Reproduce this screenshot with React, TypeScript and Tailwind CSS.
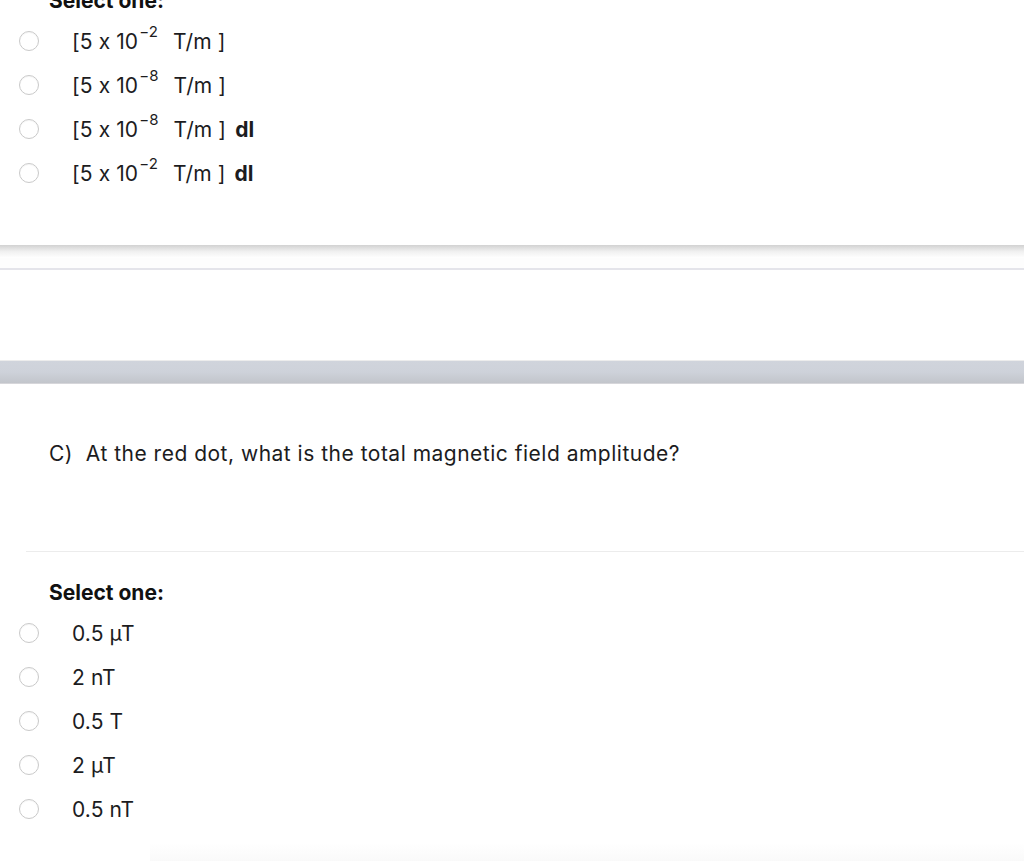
const font = { fontFamily: 'Inter, "Liberation Sans", Arial, sans-serif' };

type Sci = { exp: string; dl: boolean };

const sciOptions: Sci[] = [
  { exp: "-2", dl: false },
  { exp: "-8", dl: false },
  { exp: "-8", dl: true },
  { exp: "-2", dl: true },
];

const fieldOptions = ["0.5 µT", "2 nT", "0.5 T", "2 µT", "0.5 nT"];

function Radio() {
  return (
    <span className="ml-[19px] mr-[33px] w-[20px] h-[20px] rounded-full border border-[#c9c9c9] bg-white shadow-[inset_0_1px_1px_rgba(0,0,0,0.04)] shrink-0" />
  );
}

function OptionRow({ children }: { children: React.ReactNode }) {
  return (
    <div className="flex items-center h-[44px]">
      <Radio />
      <div className="text-[21px] tracking-[0.1px] text-[#1c1c1e] leading-none">{children}</div>
    </div>
  );
}

export default function App() {
  return (
    <div
      className="w-[1024px] h-[861px] overflow-hidden bg-white [font-feature-settings:'calt'_0]"
      style={font}
    >
      {/* Previous question card */}
      <div className="h-[245px] flex flex-col bg-white">
        <div className="-mt-[17px] h-[36px] flex items-center pl-[49px] text-[21px] font-bold text-[#111]">
          Select one:
        </div>
        {sciOptions.map((o, i) => (
          <OptionRow key={i}>
            <span className="inline-flex items-start">
              <span>[5 x 10</span>
              <span className="text-[15px] -mt-[7px] ml-[1px]">{o.exp.replace("-", "\u2212")}</span>
              <span className="ml-[15px]">T/m ]</span>
              {o.dl && <span className="ml-[9px] font-bold">dl</span>}
            </span>
          </OptionRow>
        ))}
      </div>
      <div className="h-[13px] bg-gradient-to-b from-[#d2d2d2] via-[#f0f0f0] to-white" />
      <div className="h-[10px] bg-[#fdfdfd]" />
      <div className="h-[2px] bg-[#e4e4ea]" />

      <div className="h-[91px] bg-white border-b border-[#ececec]" />

      {/* Section bar */}
      <div className="h-[23px] bg-gradient-to-b from-[#d0d4dc] via-[#ced2da] to-[#c2c5cb] border-b border-[#d6d6da]" />

      {/* Question C */}
      <div className="bg-white">
        <div className="pt-[56px] pl-[49px] text-[21px] tracking-[0.5px] leading-[28px] text-[#1c1c1e]">
          C)&nbsp; At the red dot, what is the total magnetic field amplitude?
        </div>
        <div className="mt-[83px] ml-[26px] h-[1px] bg-[#ececec]" />
        <div className="mt-[23px] h-[36px] flex items-center pl-[49px] text-[21px] font-bold text-[#111]">
          Select one:
        </div>
        {fieldOptions.map((t) => (
          <OptionRow key={t}>{t}</OptionRow>
        ))}
        <div className="mt-[12px] ml-[150px] h-[20px] bg-gradient-to-b from-white to-[#f9f9f9]" />
      </div>
    </div>
  );
}
